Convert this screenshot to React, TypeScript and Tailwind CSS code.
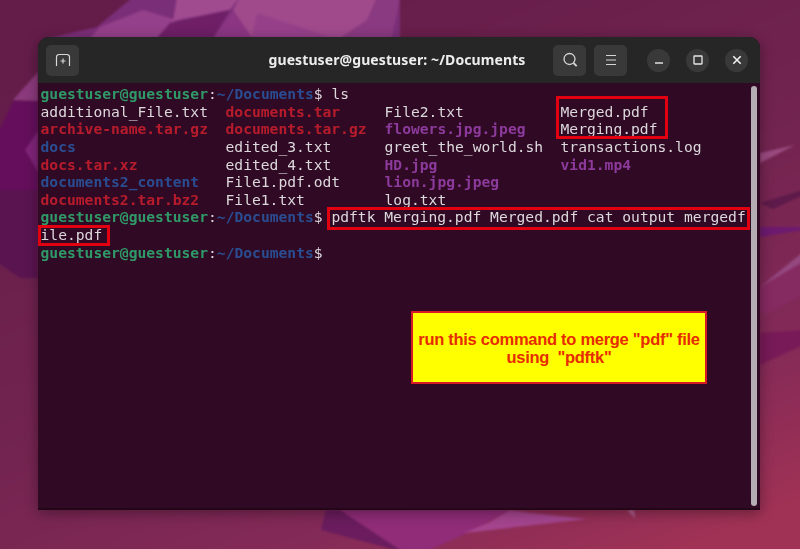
const W = "text-[#dcd8dc]";
const R = "font-bold text-[#b81c2c]";
const B = "font-bold text-[#2a4d92]";
const P = "font-bold text-[#8c3a9c]";

function Wallpaper() {
  return (
    <svg className="absolute -left-[3px] -top-[3px] blur-[0.8px]" width="806" height="555" viewBox="-3 -3 806 555">
      <defs>
        <linearGradient id="bg" x1="0.25" y1="0" x2="0.85" y2="1">
          <stop offset="0" stopColor="#641d49" />
          <stop offset="0.5" stopColor="#732450" />
          <stop offset="0.78" stopColor="#842a58" />
          <stop offset="1" stopColor="#a03255" />
        </linearGradient>
      </defs>
      <rect x="-3" y="-3" width="806" height="555" fill="url(#bg)" />
      <path d="M133 -3L97 27L40 40H400V-3Z" fill="#7b2e78" />
      <path d="M100 27L143 10L177 20L157 38H90Z" fill="#95408a" />
      <path d="M177 -3H240L230 10L173 21Z" fill="#a04a90" />
      <path d="M230 10L170 23L157 38H213Z" fill="#6e1f66" />
      <path d="M233 10L213 38H252Z" fill="#8b3583" />
      <path d="M240 -3H377V38H252L233 10Z" fill="#a04a8c" />
      <path d="M257 13L333 38H252Z" fill="#96408a" />
      <path d="M367 20L377 -3H400L392 38H340Z" fill="#8a3a80" />
      <path d="M13 100L38 72V101Z" fill="#8b3a7d" />
      <path d="M13 101H38V190H-3V135Z" fill="#650f5c" />
      <path d="M25 150L38 131V172Z" fill="#80257a" />
      <path d="M-3 190H38V278H20L-3 262Z" fill="#5a1450" />
      <path d="M326 510L321 530L403 552L380 525L340 510Z" fill="#6a1c5e" />
      <path d="M340 510L403 552H425L470 532L510 510Z" fill="#902c78" />
      <path d="M464 533L587 519L530 513L510 510L490 522Z" fill="#a5458f" />
      <path d="M627 510H634L635 518Z" fill="#b06090" />
      <path d="M760 153L795 145L760 163Z" fill="#9a4a80" />
      <path d="M760 203L803 190V195L773 209Z" fill="#5d1a4a" />
      <path d="M760 227H803V230L760 237Z" fill="#6d1a70" />
      <path d="M760 287L803 252V262L775 285Z" fill="#94487f" />
      <path d="M760 287L803 262V295L765 315L760 310Z" fill="#862a62" />
      <path d="M760 333L803 330V345L760 365Z" fill="#781a58" />
    </svg>
  );
}

function Line({ children }: { children: React.ReactNode }) {
  return <div className="h-[17.65px] whitespace-pre">{children}</div>;
}

function Prompt() {
  return (
    <>
      <span className="font-bold text-[#2f9a68]">guestuser@guestuser</span>
      <span className={W}>:</span>
      <span className={B}>~/Documents</span>
      <span className={W}>$</span>
    </>
  );
}

const rows: [string, string][][] = [
  [["additional_File.txt", W], ["documents.tar", R], ["File2.txt", W], ["Merged.pdf", W]],
  [["archive-name.tar.gz", R], ["documents.tar.gz", R], ["flowers.jpg.jpeg", P], ["Merging.pdf", W]],
  [["docs", B], ["edited_3.txt", W], ["greet_the_world.sh", W], ["transactions.log", W]],
  [["docs.tar.xz", R], ["edited_4.txt", W], ["HD.jpg", P], ["vid1.mp4", P]],
  [["documents2_content", B], ["File1.pdf.odt", W], ["lion.jpg.jpeg", P], ["", W]],
  [["documents2.tar.bz2", R], ["File1.txt", W], ["log.txt", W], ["", W]],
];

function HeadBtn({ children }: { children: React.ReactNode }) {
  return <div className="flex h-[31px] w-[33px] items-center justify-center rounded-[5px] bg-[#393939]">{children}</div>;
}

function WinBtn({ children }: { children: React.ReactNode }) {
  return <div className="flex h-[23px] w-[23px] items-center justify-center rounded-full bg-[#393939]">{children}</div>;
}

export default function App() {
  return (
    <div className="relative h-[549px] w-[800px] overflow-hidden bg-[#732450] font-['Noto_Sans',sans-serif]">
      <Wallpaper />
      <div className="absolute left-[38px] top-[37px] flex h-[473px] w-[722px] flex-col overflow-hidden rounded-t-[11px] border-b-2 border-[#240619] bg-[#300a24] shadow-[0_3px_14px_rgba(0,0,0,0.35)] blur-[0.35px]">
        <div className="grid h-[46px] shrink-0 grid-cols-[1fr_auto_1fr] items-center bg-[#262626] pl-[8px] pr-[12px]">
          <div className="flex">
            <HeadBtn>
              <svg width="18" height="16" viewBox="0 0 18 16" fill="none" stroke="#d8d8d8" strokeWidth="1.2">
                <path d="M2.5 14V5a2.5 2.5 0 0 1 2.5-2.5h8A2.5 2.5 0 0 1 15.5 5v9" />
                <path d="M9 6.5v5M6.5 9h5" />
              </svg>
            </HeadBtn>
          </div>
          <div className="text-center text-[14px] leading-none font-bold tracking-[0.1px] text-[#ededed]">
            guestuser@guestuser: ~/Documents
          </div>
          <div className="flex items-center justify-end">
            <HeadBtn>
              <svg width="18" height="18" viewBox="0 0 18 18" fill="none" stroke="#d4d4d4" strokeWidth="1.3">
                <circle cx="8.5" cy="8" r="5.5" />
                <path d="M12.5 12l3.2 3.2" strokeWidth="1.8" />
              </svg>
            </HeadBtn>
            <div className="ml-[8px]">
              <HeadBtn>
                <svg width="14" height="14" viewBox="0 0 14 14" fill="none" stroke="#d4d4d4" strokeWidth="1.1">
                  <path d="M2 2.5h10M2 7h10M2 11.5h10" />
                </svg>
              </HeadBtn>
            </div>
            <div className="ml-[20px] flex items-center gap-[16px]">
              <WinBtn>
                <svg width="12" height="12" viewBox="0 0 12 12" fill="none" stroke="#e0e0e0" strokeWidth="1.4">
                  <path d="M2 9h8" />
                </svg>
              </WinBtn>
              <WinBtn>
                <svg width="12" height="12" viewBox="0 0 12 12" fill="none" stroke="#e8e8e8" strokeWidth="1.3">
                  <rect x="2" y="2" width="8" height="8" rx="0.5" />
                </svg>
              </WinBtn>
              <WinBtn>
                <svg width="12" height="12" viewBox="0 0 12 12" fill="none" stroke="#efefef" strokeWidth="1.6">
                  <path d="M2.3 2.3l7.4 7.4M9.7 2.3l-7.4 7.4" />
                </svg>
              </WinBtn>
            </div>
          </div>
        </div>

        <div className="relative flex-1">
          <div className="pl-[2.5px] pt-[2px] font-['DejaVu_Sans_Mono',monospace] text-[14.65px] leading-[17.65px]">
            <Line>
              <Prompt />
              <span className={W}> ls</span>
            </Line>
            {rows.map((r) => (
              <div key={r[0][0]} className="grid h-[17.65px] grid-cols-[185px_159px_176px_1fr] whitespace-pre">
                {r.map(([t, c], i) => (
                  <span key={i} className={c}>{t}</span>
                ))}
              </div>
            ))}
            <Line>
              <Prompt />
              <span className={W}> pdftk Merging.pdf Merged.pdf cat output mergedf</span>
            </Line>
            <Line>
              <span className={W}>ile.pdf</span>
            </Line>
            <Line>
              <Prompt />
            </Line>
          </div>

          <div className="absolute bottom-[2px] right-[3px] top-[3px] w-[6px] rounded-full bg-[#b4adb4]" />
          <div className="absolute left-[518px] top-[13px] h-[43px] w-[112px] border-[3px] border-[#e00010]" />
          <div className="absolute left-[289px] top-[124px] h-[23px] w-[423px] border-[3px] border-[#e00010]" />
          <div className="absolute left-0 top-[142px] h-[21px] w-[72px] border-[3px] border-[#e00010]" />
          <div className="absolute left-[373px] top-[228px] flex h-[73px] w-[296px] flex-col items-center justify-center border-[2px] border-[#d81a24] bg-[#ffff00] font-['Liberation_Sans',sans-serif] text-[16.5px] leading-[18px] font-bold tracking-[-0.28px] text-[#e62c00]">
            <div>run this command to merge "pdf" file</div>
            <div className="[word-spacing:4px]">using "pdftk"</div>
          </div>
        </div>
      </div>
    </div>
  );
}
